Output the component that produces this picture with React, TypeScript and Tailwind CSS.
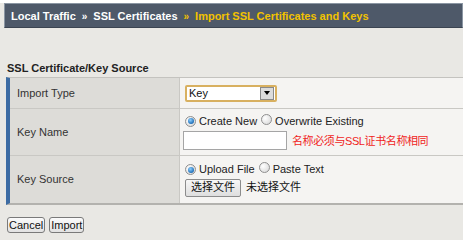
import React from 'react';

const Radio: React.FC<{ checked?: boolean }> = ({ checked }) => (
  <span className="relative inline-flex w-[11px] h-[11px] shrink-0 items-center justify-center rounded-full border border-[#8f8f8f] bg-[radial-gradient(circle_at_35%_35%,#ffffff,#d4d4d4)]">
    {checked && (
      <span className="w-[6px] h-[6px] rounded-full bg-[radial-gradient(circle_at_40%_35%,#8fd0ff,#1f6fb8_70%,#0d4a86)]" />
    )}
  </span>
);

const Row: React.FC<{ label: string; height: string; last?: boolean; children: React.ReactNode }> = ({ label, height, last, children }) => (
  <div className={`flex ${height} ${last ? '' : 'border-b border-[#c9c8c4]'}`}>
    <div className="w-[170px] shrink-0 flex items-center pl-[7px] bg-[#dddcd8] text-[11px] text-[#333] border-r border-[#c9c8c4]">
      {label}
    </div>
    <div className="flex-1 flex flex-col justify-center pl-[5px] bg-[#f5f4f2]">{children}</div>
  </div>
);

const App: React.FC = () => {
  return (
    <div className="w-[463px] h-[244px] bg-white pt-[3px] overflow-hidden font-['Liberation_Sans','Noto_Sans_CJK_SC',sans-serif]">
      <div className="h-[237px] bg-[#e9e8e4] flex flex-col">
        {/* breadcrumb bar */}
        <div className="ml-[4px] h-[25px] border border-[#8b96a3] border-b-[#3b4451] bg-[#4e5969] flex items-center pl-[6px] pt-[2px] text-[11px] font-bold">
          <span className="text-white">Local Traffic</span>
          <span className="text-white mx-[6px] text-[10px]">»</span>
          <span className="text-white">SSL Certificates</span>
          <span className="text-[#f2c200] mx-[6px] text-[10px]">»</span>
          <span className="text-[#f2c200]">Import SSL Certificates and Keys</span>
        </div>

        <div className="mt-[33px] ml-[7px] h-[14px] leading-[14px] text-[11px] font-bold text-[#222]">
          SSL Certificate/Key Source
        </div>

        {/* form table */}
        <div className="mt-[2px] ml-[6px] border-l-4 border-l-[#3d6ca3] border-t border-t-[#c4c3bf] border-b-2 border-b-[#b3b2ae]">
          <Row label="Import Type" height="h-[31px]">
            <div className="w-[92px] h-[17px] rounded-[2px] border-2 border-[#d8b060] bg-white flex items-center justify-between pl-[2px] pr-px">
              <span className="text-[11px] text-[#111]">Key</span>
              <span className="w-[14px] h-[13px] border border-[#8a8a8a] bg-[#dcdcdc] flex items-center justify-center">
                <span className="w-0 h-0 border-l-[3px] border-r-[3px] border-t-[4px] border-l-transparent border-r-transparent border-t-black" />
              </span>
            </div>
          </Row>
          <Row label="Key Name" height="h-[47px]">
            <div className="flex items-center h-[14px] text-[11px] text-[#222]">
              <Radio checked />
              <span className="ml-[3px]">Create New</span>
              <span className="ml-[4px]"><Radio /></span>
              <span className="ml-[3px]">Overwrite Existing</span>
            </div>
            <div className="flex items-center mt-[3px] -ml-[2px]">
              <div className="w-[104px] h-[19px] border border-[#a5a5a5] bg-white" />
              <span className="ml-[5px] mt-[2px] text-[11px] tracking-[-0.4px] text-[#f01c1c] leading-none">名称必须与SSL证书名称相同</span>
            </div>
          </Row>
          <Row label="Key Source" height="h-[47px]" last>
            <div className="flex items-center h-[14px] text-[11px] text-[#222]">
              <Radio checked />
              <span className="ml-[3px]">Upload File</span>
              <span className="ml-[4px]"><Radio /></span>
              <span className="ml-[3px]">Paste Text</span>
            </div>
            <div className="flex items-center mt-[2px]">
              <div className="w-[56px] h-[18px] rounded-[2px] border border-[#8c8c8c] bg-gradient-to-b from-[#f7f7f7] to-[#dedede] flex items-center justify-center text-[11px] text-[#111]">
                选择文件
              </div>
              <span className="ml-[5px] text-[11px] text-[#111]">未选择文件</span>
            </div>
          </Row>
        </div>

        {/* actions */}
        <div className="mt-[12px] ml-[7px] flex gap-[4px]">
          <div className="h-[16px] px-[1px] rounded-[3px] border border-[#7a7a7a] bg-gradient-to-b from-[#fbfbfb] to-[#e2e2e2] flex items-center text-[11px] text-[#111]">
            Cancel
          </div>
          <div className="h-[16px] px-[1px] rounded-[3px] border border-[#7a7a7a] bg-gradient-to-b from-[#fbfbfb] to-[#e2e2e2] flex items-center text-[11px] text-[#111]">
            Import
          </div>
        </div>
      </div>
    </div>
  );
};

export default App;
